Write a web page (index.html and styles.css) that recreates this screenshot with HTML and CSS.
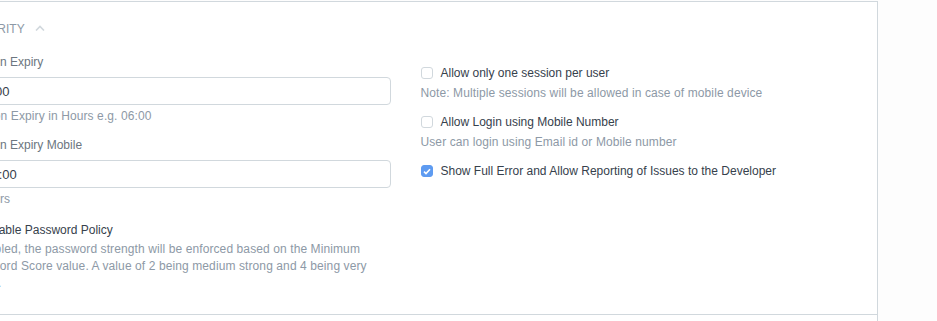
FILE: index.html
```html
<!DOCTYPE html>
<html lang="en">
<head>
    <meta charset="UTF-8" />
    <meta name="viewport" content="width=device-width, initial-scale=1.0" />
    <title>System Settings - Security</title>
    <link rel="stylesheet" href="styles.css">
</head>
<body>
    <div class="layout-main">
        <div class="form-section">
            <div class="section-head">
                <span>Security</span>
                <svg class="collapse-icon" width="10" height="6" viewBox="0 0 10 6">
                    <polyline points="1,5.5 5,1.5 9,5.5" fill="none" stroke="#d1d8dd" stroke-width="1.6" />
                </svg>
            </div>
            <div class="section-body">
                <div class="form-column">
                    <div class="form-group">
                        <label class="control-label">Session Expiry</label>
                        <input class="form-control" type="text" value="06:00" />
                        <p class="help-box">Session Expiry in Hours e.g. 06:00</p>
                    </div>
                    <div class="form-group">
                        <label class="control-label">Session Expiry Mobile</label>
                        <input class="form-control" type="text" value="720:00" />
                        <p class="help-box">In Hours</p>
                    </div>
                    <div class="form-group check-group policy-group">
                        <label class="check-label">
                            <span class="check-box"></span>
                            Enable Password Policy
                        </label>
                        <p class="help-box">If enabled, the password strength will be enforced based on the Minimum Password Score value. A value of 2 being medium strong and 4 being very strong.</p>
                    </div>
                </div>
                <div class="form-column right-column">
                    <div class="form-group check-group">
                        <label class="check-label">
                            <span class="check-box"></span>
                            Allow only one session per user
                        </label>
                        <p class="help-box">Note: Multiple sessions will be allowed in case of mobile device</p>
                    </div>
                    <div class="form-group check-group">
                        <label class="check-label">
                            <span class="check-box"></span>
                            Allow Login using Mobile Number
                        </label>
                        <p class="help-box">User can login using Email id or Mobile number</p>
                    </div>
                    <div class="form-group check-group">
                        <label class="check-label">
                            <span class="check-box checked">
                                <svg width="8" height="7" viewBox="0 0 8 7">
                                    <polyline points="1,3.6 3,5.6 7,1.2" fill="none" stroke="#ffffff" stroke-width="1.6" />
                                </svg>
                            </span>
                            Show Full Error and Allow Reporting of Issues to the Developer
                        </label>
                    </div>
                </div>
            </div>
        </div>
        <div class="form-section next-section"></div>
    </div>
</body>
</html>
```

FILE: styles.css
```css
* {
    margin: 0;
    padding: 0;
    box-sizing: border-box;
    font-family: 'Liberation Sans', Arial, sans-serif;
}

body {
    background-color: #fdfdfd;
    overflow: hidden;
    height: 321px;
}

.layout-main {
    margin-left: -67px;
    width: 945px;
    height: 321px;
    background-color: #ffffff;
    border-left: 1px solid #d1d8dd;
    border-right: 1px solid #d1d8dd;
}

.form-section {
    margin-top: 1px;
    border-top: 1px solid #d1d8dd;
    padding: 0 15px;
    height: 313px;
}

.next-section {
    margin-top: 0;
    height: 7px;
}

.section-head {
    display: flex;
    align-items: center;
    gap: 10px;
    padding: 19px 15px 0;
    height: 34px;
    font-size: 12px;
    line-height: 16px;
    color: #8d99a6;
    text-transform: uppercase;
}

.collapse-icon {
    margin-top: -1px;
}

.section-body {
    display: grid;
    grid-template-columns: 1fr 1fr;
    padding-top: 18px;
}

.form-column {
    padding: 0 15px;
}

.right-column {
    padding-top: 11px;
}

.form-group {
    margin-bottom: 13px;
}

.policy-group {
    padding-top: 2px;
}

.control-label {
    display: block;
    font-size: 12px;
    line-height: 16px;
    color: #6c7680;
    margin-bottom: 7px;
}

.form-control {
    display: block;
    width: 100%;
    height: 28px;
    padding: 0 12px;
    font-size: 13px;
    color: #36414c;
    border: 1px solid #d1d8dd;
    border-radius: 4px;
    background-color: #ffffff;
    outline: none;
}

.help-box {
    font-size: 12px;
    line-height: 16px;
    letter-spacing: 0.1px;
    color: #8d99a6;
    margin-top: 3px;
}

.check-group .help-box {
    margin-top: 4px;
}

.policy-group .help-box {
    line-height: 17px;
    margin-top: 3px;
}

.check-label {
    display: flex;
    align-items: center;
    font-size: 12px;
    line-height: 16px;
    color: #36414c;
}

.check-box {
    display: flex;
    justify-content: center;
    align-items: center;
    width: 12px;
    height: 12px;
    margin-right: 8px;
    border: 1px solid #d1d8dd;
    border-radius: 3px;
    background-color: #ffffff;
}

.check-box.checked {
    background-color: #5e9bf1;
    border-color: #5e9bf1;
}
```
